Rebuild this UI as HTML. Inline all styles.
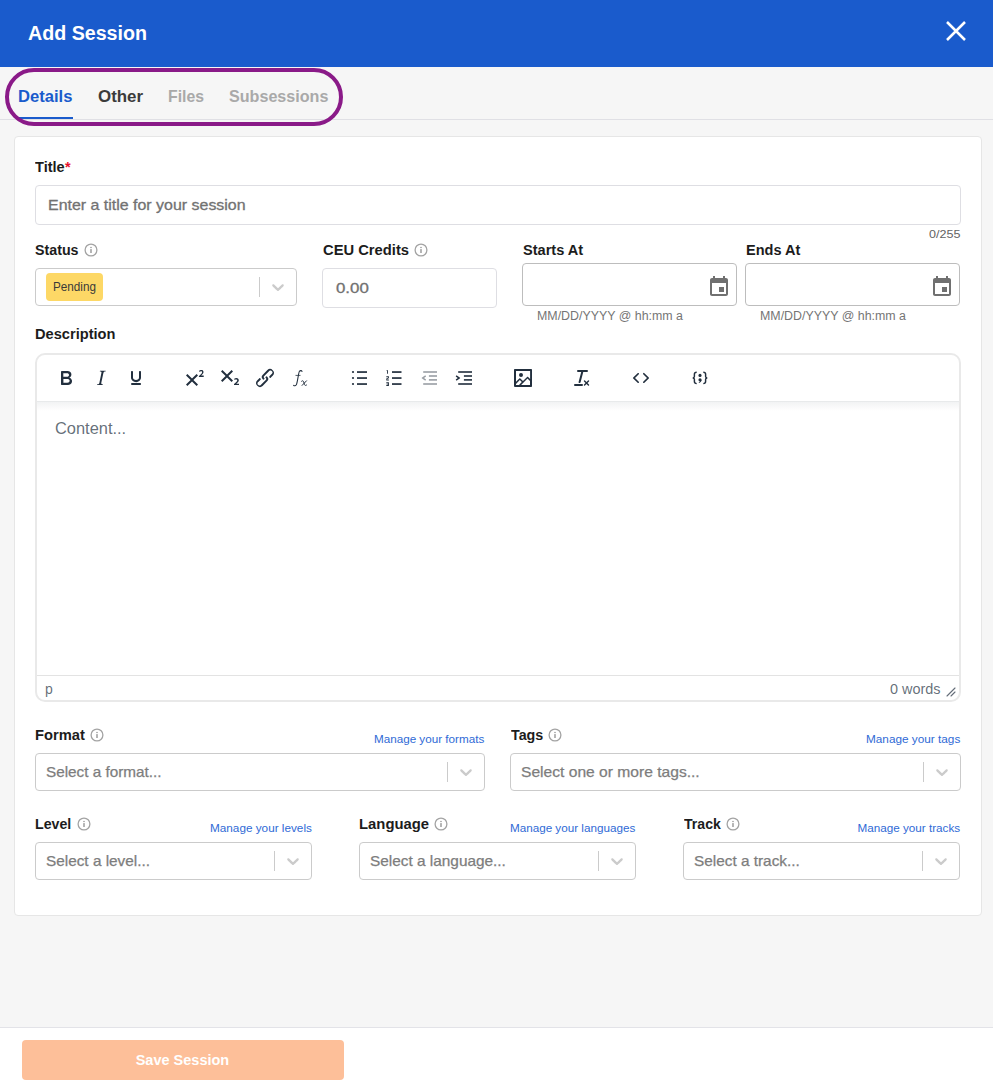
<!DOCTYPE html>
<html><head><meta charset="utf-8"><style>
html,body{margin:0;padding:0;width:993px;height:1086px;overflow:hidden;background:#f6f6f6;position:relative;font-family:"Liberation Sans",sans-serif}
body>div,body>svg{position:absolute}
.t{white-space:nowrap;position:absolute}
svg{position:absolute;overflow:visible}
</style></head><body>
<div style="left:0px;top:0px;width:993px;height:67px;background:#1a5bcc"></div>
<div class="t" style="left:28.20px;top:22.89px;font-size:20px;line-height:20px;color:#fff;font-weight:700;transform:scaleX(0.9824);transform-origin:0 0;">Add Session</div>
<svg style="left:944.5px;top:19.7px" width="22" height="22" viewBox="0 0 22 22"><path d="M2 2L20 20M20 2L2 20" stroke="#fff" stroke-width="2.5" stroke-linecap="butt"/></svg>
<div style="left:0px;top:67px;width:993px;height:960px;background:#f6f6f6"></div>
<div style="left:0px;top:119px;width:993px;height:1px;background:#e0e0e5"></div>
<div class="t" style="left:18.00px;top:88.30px;font-size:16.5px;line-height:16.5px;color:#1a5bcc;font-weight:700;transform:scaleX(1.0054);transform-origin:0 0;">Details</div>
<div style="left:18px;top:117px;width:55px;height:2px;background:#1a5bcc"></div>
<div class="t" style="left:97.50px;top:88.30px;font-size:16.5px;line-height:16.5px;color:#3b3b3b;font-weight:700;transform:scaleX(1.0249);transform-origin:0 0;">Other</div>
<div class="t" style="left:167.60px;top:88.30px;font-size:16.5px;line-height:16.5px;color:#a9a9a9;font-weight:700;transform:scaleX(0.9574);transform-origin:0 0;">Files</div>
<div class="t" style="left:228.70px;top:88.30px;font-size:16.5px;line-height:16.5px;color:#a9a9a9;font-weight:700;transform:scaleX(0.9765);transform-origin:0 0;">Subsessions</div>
<svg style="left:0;top:60px" width="360" height="75"><rect x="7" y="10" width="334" height="54" rx="27" ry="27" fill="none" stroke="#8a1a88" stroke-width="4"/></svg>
<div style="left:14px;top:136px;width:968px;height:780px;background:#fff;border:1px solid #e6e6e6;border-radius:4px;box-sizing:border-box"></div>
<div class="t" style="left:35.00px;top:159.96px;font-size:14.5px;line-height:14.5px;color:#1c1c1c;font-weight:700;transform:scaleX(1.0052);transform-origin:0 0;">Title</div>
<div class="t" style="left:65.00px;top:159.96px;font-size:14.5px;line-height:14.5px;color:#e8112d;font-weight:700;">*</div>
<div style="left:35px;top:185px;width:926px;height:40px;border:1px solid #dedee3;border-radius:4px;box-sizing:border-box;background:#fff"></div>
<div class="t" style="left:48.30px;top:197.76px;font-size:14.5px;line-height:14.5px;color:#727272;font-weight:400;transform:scaleX(1.0995);transform-origin:0 0;-webkit-text-stroke:0.3px #727272;">Enter a title for your session</div>
<div class="t" style="left:928.70px;top:228.37px;font-size:11.6px;line-height:11.6px;color:#636363;font-weight:400;transform:scaleX(1.0817);transform-origin:0 0;">0/255</div>
<div class="t" style="left:35.00px;top:242.56px;font-size:14.5px;line-height:14.5px;color:#1c1c1c;font-weight:700;transform:scaleX(0.9816);transform-origin:0 0;">Status</div>
<svg style="left:84px;top:242.8px" width="14" height="14" viewBox="0 0 14 14"><circle cx="7" cy="7" r="5.9" fill="none" stroke="#a3a3a3" stroke-width="1.3"/><rect x="6.2" y="3.9" width="1.6" height="1.2" fill="#a3a3a3"/><rect x="6.2" y="6.1" width="1.6" height="3.9" fill="#a3a3a3"/></svg>
<div style="left:35px;top:268px;width:262px;height:38px;border:1px solid #cbcbcb;border-radius:4px;box-sizing:border-box;background:#fff"></div>
<div style="left:259px;top:277px;width:1px;height:20px;background:#cbcbcb"></div>
<svg style="left:268px;top:277.0px" width="20" height="20" viewBox="0 0 20 20"><path d="M4.516 7.548c0.436-0.446 1.043-0.481 1.576 0l3.908 3.747 3.908-3.747c0.533-0.481 1.141-0.446 1.574 0 0.436 0.445 0.408 1.197 0 1.615-0.406 0.418-4.695 4.502-4.695 4.502-0.217 0.223-0.502 0.335-0.787 0.335s-0.57-0.112-0.789-0.335c0 0-4.287-4.084-4.695-4.502s-0.436-1.17 0-1.615z" fill="#cbcbcb"/></svg>
<div style="left:46px;top:273px;width:57px;height:28px;background:#fdd866;border-radius:4px"></div>
<div class="t" style="left:52.60px;top:281.23px;font-size:12px;line-height:12px;color:#3a3a3a;font-weight:400;transform:scaleX(0.9764);transform-origin:0 0;">Pending</div>
<div class="t" style="left:322.50px;top:242.96px;font-size:14.5px;line-height:14.5px;color:#1c1c1c;font-weight:700;transform:scaleX(1.0165);transform-origin:0 0;">CEU Credits</div>
<svg style="left:413.9px;top:242.8px" width="14" height="14" viewBox="0 0 14 14"><circle cx="7" cy="7" r="5.9" fill="none" stroke="#a3a3a3" stroke-width="1.3"/><rect x="6.2" y="3.9" width="1.6" height="1.2" fill="#a3a3a3"/><rect x="6.2" y="6.1" width="1.6" height="3.9" fill="#a3a3a3"/></svg>
<div style="left:322px;top:268px;width:175px;height:40px;border:1px solid #dedee3;border-radius:4px;box-sizing:border-box;background:#fff"></div>
<div class="t" style="left:335.50px;top:280.76px;font-size:14.5px;line-height:14.5px;color:#727272;font-weight:400;transform:scaleX(1.1622);transform-origin:0 0;-webkit-text-stroke:0.3px #727272;">0.00</div>
<div class="t" style="left:523.00px;top:243.06px;font-size:14.5px;line-height:14.5px;color:#1c1c1c;font-weight:700;transform:scaleX(1.0051);transform-origin:0 0;">Starts At</div>
<div style="left:522px;top:263px;width:215px;height:43px;border:1px solid #bdbdbd;border-radius:4px;box-sizing:border-box;background:#fff"></div>
<svg style="left:707px;top:275px" width="24" height="24" viewBox="0 0 24 24"><path d="M17 12h-5v5h5v-5zM16 1v2H8V1H6v2H5c-1.11 0-1.99.9-1.99 2L3 19c0 1.1.89 2 2 2h14c1.1 0 2-.9 2-2V5c0-1.1-.9-2-2-2h-1V1h-2zm3 18H5V8h14v11z" fill="#707070"/></svg>
<div class="t" style="left:537.00px;top:309.78px;font-size:12.3px;line-height:12.3px;color:#757575;font-weight:400;transform:scaleX(1.0079);transform-origin:0 0;">MM/DD/YYYY @ hh:mm a</div>
<div class="t" style="left:746.00px;top:243.06px;font-size:14.5px;line-height:14.5px;color:#1c1c1c;font-weight:700;">Ends At</div>
<div style="left:745px;top:263px;width:215px;height:43px;border:1px solid #bdbdbd;border-radius:4px;box-sizing:border-box;background:#fff"></div>
<svg style="left:930px;top:275px" width="24" height="24" viewBox="0 0 24 24"><path d="M17 12h-5v5h5v-5zM16 1v2H8V1H6v2H5c-1.11 0-1.99.9-1.99 2L3 19c0 1.1.89 2 2 2h14c1.1 0 2-.9 2-2V5c0-1.1-.9-2-2-2h-1V1h-2zm3 18H5V8h14v11z" fill="#707070"/></svg>
<div class="t" style="left:760.00px;top:309.78px;font-size:12.3px;line-height:12.3px;color:#757575;font-weight:400;transform:scaleX(1.0079);transform-origin:0 0;">MM/DD/YYYY @ hh:mm a</div>
<div class="t" style="left:35.00px;top:326.96px;font-size:14.5px;line-height:14.5px;color:#1c1c1c;font-weight:700;transform:scaleX(1.0092);transform-origin:0 0;">Description</div>
<div style="left:35px;top:352.5px;width:926px;height:349.5px;border:2px solid #e9e9e9;border-radius:10px;box-sizing:border-box;background:#fff;overflow:hidden"></div>
<div style="left:37px;top:402px;width:922px;height:9px;background:linear-gradient(rgba(34,47,62,.06),rgba(34,47,62,0))"></div>
<div style="left:37px;top:401px;width:922px;height:1px;background:rgba(34,47,62,.1)"></div>
<svg style="left:54px;top:366px" width="24" height="24" viewBox="0 0 24 24"><path d="M7.8 19c-.3 0-.5 0-.6-.2l-.2-.5V5.7c0-.2 0-.4.2-.5l.6-.2h5c1.5 0 2.7.3 3.5 1 .7.6 1.1 1.4 1.1 2.5a3 3 0 0 1-.6 1.9c-.4.6-1 1-1.6 1.2.4.1.9.3 1.3.6s.8.7 1 1.2c.4.4.5 1 .5 1.6 0 1.3-.4 2.3-1.3 3-.8.7-2.1 1-3.8 1H7.8Zm5-8.3c.6 0 1.2-.1 1.6-.5.4-.3.6-.7.6-1.3 0-1.1-.8-1.7-2.3-1.7H9.3v3.5h3.4Zm.5 6c.7 0 1.3-.1 1.700-.4.4-.4.6-.9.6-1.5s-.2-1-.7-1.4c-.4-.3-1-.4-2-.4H9.4v3.8h4Z" fill="#222f3e" fill-rule="evenodd"/></svg>
<svg style="left:89px;top:366px" width="24" height="24" viewBox="0 0 24 24"><path d="m16.7 4.7-.1.9h-.3c-.6 0-1 0-1.4.3-.3.3-.4.6-.5 1.1l-2.1 9.8v.6c0 .5.4.8 1.4.8h.2l-.2.8H8l.2-.8h.2c1.1 0 1.8-.5 2-1.5l2-9.8.1-.5c0-.6-.4-.8-1.4-.8h-.3l.2-.9h5.8Z" fill="#222f3e" fill-rule="evenodd"/></svg>
<svg style="left:124px;top:366px" width="24" height="24" viewBox="0 0 24 24"><path d="M16 5c.6 0 1 .4 1 1v5.5a4 4 0 0 1-.4 1.8l-1 1.4a5.3 5.3 0 0 1-5.5 1 5 5 0 0 1-1.6-1c-.5-.4-.8-.9-1.1-1.4a4 4 0 0 1-.4-1.800V6c0-.6.4-1 1-1s1 .4 1 1v5.5c0 .3 0 .6.2 1l.6.7a3.300 3.300 0 0 0 2.2.8 3.400 3.400 0 0 0 2.2-.8c.3-.2.4-.5.6-.8l.2-.9V6c0-.6.4-1 1-1ZM8 17h8c.6 0 1 .4 1 1s-.4 1-1 1H8a1 1 0 0 1 0-2Z" fill="#222f3e" fill-rule="evenodd"/></svg>
<svg style="left:183px;top:366px" width="24" height="24" viewBox="0 0 24 24"><path d="M15 9.4 10.4 14l4.6 4.6-1.4 1.4L9 15.4 4.4 20 3 18.6 7.6 14 3 9.4 4.4 8 9 12.6 13.6 8 15 9.4Zm5.9 1.6h-5v-1l1-.8 1.7-1.6c.3-.5.5-.9.5-1.300 0-.3 0-.5-.2-.7-.2-.2-.5-.3-.9-.3l-.8.2-.7.4-.4-1.2c.2-.2.5-.4 1-.5.3-.2.8-.2 1.2-.2.7 0 1.2.1 1.6.5.4.4.6.9.6 1.5s-.2 1.1-.5 1.6a8 8 0 0 1-1.3 1.3l-.6.6h2.6V11Z" fill="#222f3e" fill-rule="nonzero"/></svg>
<svg style="left:218px;top:366px" width="24" height="24" viewBox="0 0 24 24"><path d="M10.4 10 15 14.6 13.6 16 9 11.4 4.4 16 3 14.6 7.6 10 3 5.4 4.4 4 9 8.600 13.600 4 15 5.4 10.4 10ZM21 19h-5v-1l1-.8 1.7-1.6c.3-.4.5-.8.5-1.2 0-.3 0-.6-.2-.7-.2-.2-.5-.3-.9-.3a2 2 0 0 0-.8.2l-.7.3-.4-1.100 1-.6 1.2-.2c.8 0 1.4.3 1.800.7.4.4.6.9.6 1.5s-.2 1.1-.5 1.6a8 8 0 0 1-1.3 1.3l-.6.6h2.6V19Z" fill="#222f3e" fill-rule="nonzero"/></svg>
<svg style="left:253px;top:366px" width="24" height="24" viewBox="0 0 24 24"><path d="M6.2 12.3a1 1 0 0 1 1.4 1.4l-2 2a2 2 0 1 0 2.6 2.8l4.8-4.8a1 1 0 0 0 0-1.4 1 1 0 1 1 1.4-1.3 2.9 2.9 0 0 1 0 4L9.600 20a3.900 3.900 0 0 1-5.500-5.500l2-2Zm11.600-.6a1 1 0 0 1-1.400-1.400l2-2a2 2 0 1 0-2.600-2.800L11 10.300a1 1 0 0 0 0 1.400A1 1 0 1 1 9.600 13a2.900 2.900 0 0 1 0-4L14.400 4a3.900 3.900 0 0 1 5.500 5.500l-2 2Z" fill="#222f3e" fill-rule="nonzero"/></svg>
<svg style="left:288px;top:366px" width="24" height="24" viewBox="0 0 24 24"><g fill="none" stroke="#222f3e" stroke-linecap="round"><path d="M14 5.4C13.7 4.5 12.2 4.3 11.4 5.3C10.5 6.5 9.5 16.6 8.3 18.8C7.7 19.8 6.4 20 5.6 19.3" stroke-width="1.05"/><path d="M7.9 9.4H12.1" stroke-width="0.8"/><path d="M13.5 15.3C14.3 14.4 15.2 14.5 15.6 15.8L16.6 18.7C16.9 19.6 17.8 19.8 18.7 18.9" stroke-width="0.9"/><path d="M18.5 14.8L14.1 19.4" stroke-width="1"/></g></svg>
<svg style="left:347px;top:366px" width="24" height="24" viewBox="0 0 24 24"><g fill="#222f3e"><circle cx="6" cy="6" r="1.1"/><circle cx="6" cy="12" r="1.1"/><circle cx="6" cy="18" r="1.1"/><rect x="10" y="5.2" width="10" height="1.7"/><rect x="10" y="11.2" width="10" height="1.7"/><rect x="10" y="17.2" width="10" height="1.7"/></g></svg>
<svg style="left:382px;top:366px" width="24" height="24" viewBox="0 0 24 24"><g fill="#222f3e"><rect x="10" y="5.2" width="9.5" height="1.7"/><rect x="10" y="11.2" width="9.5" height="1.7"/><rect x="10" y="17.2" width="9.5" height="1.7"/><path d="M4.600 4.200h1.400v3.600h-.9V5h-.5z"/><path d="M4.300 10.300h2.600v1.900l-1.700 .8v.5h1.700v.9H4.300v-1.900l1.700-.8v-.5H4.300z"/><path d="M4.300 16.300h2.600v3.600H4.300v-.8h1.700v-.6H4.600v-.7h1.400v-.6H4.300z"/></g></svg>
<svg style="left:417px;top:366px" width="24" height="24" viewBox="0 0 24 24"><g fill="#9a9fa5"><rect x="6.2" y="5.2" width="13.8" height="1.6"/><rect x="11.9" y="9.2" width="8.1" height="1.6"/><rect x="11.9" y="13.1" width="8.1" height="1.6"/><rect x="6.2" y="17.2" width="13.8" height="1.6"/><path d="M8.3 9.3l.8 1.2-2.1 1.5 2.1 1.5-.8 1.2-3.6-2.4v-.6z"/></g></svg>
<svg style="left:452px;top:366px" width="24" height="24" viewBox="0 0 24 24"><g fill="#222f3e"><rect x="6.2" y="5.2" width="13.8" height="1.6"/><rect x="11.9" y="9.2" width="8.1" height="1.6"/><rect x="11.9" y="13.1" width="8.1" height="1.6"/><rect x="6.2" y="17.2" width="13.8" height="1.6"/><path d="M4.5 9.3l-.8 1.2 2.1 1.5-2.1 1.5.8 1.2 3.6-2.4v-.6z"/></g></svg>
<svg style="left:511px;top:366px" width="24" height="24" viewBox="0 0 24 24"><path d="M5 15.700l3.300-3.200c.3-.3.7-.3 1 0L12 15l4.100-4c.3-.4.8-.4 1 0l2 1.900V5H5v10.700zM5 18V19h3l2.800-2.900-2-2L5 17.900zm14-3l-2.500-2.400-6.400 6.500H19v-4zM4 3h16c.6 0 1 .4 1 1v16c0 .6-.4 1-1 1H4a1 1 0 0 1-1-1V4c0-.6.4-1 1-1zm6 8a2 2 0 1 1 0-4 2 2 0 0 1 0 4z" fill="#222f3e" fill-rule="nonzero"/></svg>
<svg style="left:570px;top:366px" width="24" height="24" viewBox="0 0 24 24"><path d="M13.200 6a1 1 0 0 1 0 .2l-2.600 10a1 1 0 0 1-1 .8h-.2a.8.8 0 0 1-.8-1l2.600-10H8a1 1 0 1 1 0-2h9a1 1 0 0 1 0 2h-3.800ZM5 18h7a1 1 0 0 1 0 2H5a1 1 0 0 1 0-2Zm13 1.500L16.500 18 15 19.500a.7.7 0 0 1-1-1l1.500-1.500-1.500-1.500a.7.7 0 0 1 1-1l1.500 1.500 1.500-1.500a.7.7 0 0 1 1 1L17.500 17l1.500 1.500a.7.7 0 0 1-1 1Z" fill="#222f3e" fill-rule="evenodd"/></svg>
<svg style="left:629px;top:366px" width="24" height="24" viewBox="0 0 24 24"><path d="M9.800 15.700c.3.3.3.8 0 1-.3.4-.9.4-1.200 0l-4.400-4.100a.8.8 0 0 1 0-1.200l4.400-4.200c.3-.3.9-.3 1.200 0 .3.3.3.8 0 1.100L6 12l3.800 3.700ZM14.200 15.700c-.3.3-.3.8 0 1 .4.4.9.4 1.200 0l4.400-4.100c.3-.3.3-.9 0-1.200l-4.400-4.200a.8.8 0 0 0-1.200 0c-.3.3-.3.8 0 1.100L18 12l-3.800 3.700Z" fill="#222f3e" fill-rule="nonzero"/></svg>
<svg style="left:688px;top:366px" width="24" height="24" viewBox="0 0 24 24"><g fill="none" stroke="#222f3e" stroke-width="1.45"><path d="M8.7 6.2C7 6.2 6.4 6.9 6.4 8.1V10.5C6.4 11.3 5.9 11.9 4.7 11.9C5.9 11.9 6.4 12.5 6.4 13.3V15.6C6.4 16.9 7 17.6 8.7 17.6"/><path d="M15.3 6.2C17 6.2 17.6 6.9 17.6 8.1V10.5C17.6 11.3 18.1 11.9 19.3 11.9C18.1 11.9 17.6 12.5 17.6 13.3V15.6C17.6 16.9 17 17.6 15.3 17.6"/></g><g fill="#222f3e"><circle cx="12" cy="9.4" r="1.55"/><circle cx="12" cy="13.7" r="1.55"/><path d="M13.5 13.7C13.6 15.4 12.6 16.4 10.9 16.9L10.8 16.2C11.8 15.8 12.3 15.1 12.2 14.3Z"/></g></svg>
<div class="t" style="left:54.8px;top:420.5px;font-size:16px;line-height:16px;color:rgba(34,47,62,.7);transform:scaleX(1.025);transform-origin:0 0">Content...</div>
<div style="left:37px;top:675px;width:922px;height:1px;background:#e3e3e3"></div>
<div class="t" style="left:45px;top:682px;font-size:14px;line-height:14px;color:rgba(34,47,62,.7)">p</div>
<div class="t" style="left:890.4px;top:682px;font-size:14px;line-height:14px;color:rgba(34,47,62,.7);transform:scaleX(1.03);transform-origin:0 0">0 words</div>
<svg style="left:946px;top:687px" width="10" height="10" viewBox="0 0 10 10"><path d="M9 1L1 9M9 5L5 9" stroke="rgba(34,47,62,.7)" stroke-width="1.1" stroke-linecap="round"/></svg>

<div class="t" style="left:35.00px;top:728.06px;font-size:14.5px;line-height:14.5px;color:#1c1c1c;font-weight:700;transform:scaleX(1.0134);transform-origin:0 0;">Format</div>
<svg style="left:90px;top:727.8px" width="14" height="14" viewBox="0 0 14 14"><circle cx="7" cy="7" r="5.9" fill="none" stroke="#a3a3a3" stroke-width="1.3"/><rect x="6.2" y="3.9" width="1.6" height="1.2" fill="#a3a3a3"/><rect x="6.2" y="6.1" width="1.6" height="3.9" fill="#a3a3a3"/></svg>
<div class="t" style="left:373.90px;top:733.18px;font-size:11.7px;line-height:11.7px;color:#2f6ad6;font-weight:400;">Manage your formats</div>
<div style="left:35px;top:753px;width:450px;height:38px;border:1px solid #cbcbcb;border-radius:4px;box-sizing:border-box;background:#fff"></div>
<div style="left:447px;top:762px;width:1px;height:20px;background:#cbcbcb"></div>
<svg style="left:456px;top:762.0px" width="20" height="20" viewBox="0 0 20 20"><path d="M4.516 7.548c0.436-0.446 1.043-0.481 1.576 0l3.908 3.747 3.908-3.747c0.533-0.481 1.141-0.446 1.574 0 0.436 0.445 0.408 1.197 0 1.615-0.406 0.418-4.695 4.502-4.695 4.502-0.217 0.223-0.502 0.335-0.787 0.335s-0.57-0.112-0.789-0.335c0 0-4.287-4.084-4.695-4.502s-0.436-1.17 0-1.615z" fill="#cbcbcb"/></svg>
<div class="t" style="left:46.00px;top:764.86px;font-size:14.5px;line-height:14.5px;color:#7d7d7d;font-weight:400;transform:scaleX(1.0547);transform-origin:0 0;-webkit-text-stroke:0.25px #7d7d7d;">Select a format...</div>
<div class="t" style="left:510.90px;top:728.06px;font-size:14.5px;line-height:14.5px;color:#1c1c1c;font-weight:700;transform:scaleX(0.9857);transform-origin:0 0;">Tags</div>
<svg style="left:548.2px;top:727.8px" width="14" height="14" viewBox="0 0 14 14"><circle cx="7" cy="7" r="5.9" fill="none" stroke="#a3a3a3" stroke-width="1.3"/><rect x="6.2" y="3.9" width="1.6" height="1.2" fill="#a3a3a3"/><rect x="6.2" y="6.1" width="1.6" height="3.9" fill="#a3a3a3"/></svg>
<div class="t" style="left:865.90px;top:733.18px;font-size:11.7px;line-height:11.7px;color:#2f6ad6;font-weight:400;transform:scaleX(1.0079);transform-origin:0 0;">Manage your tags</div>
<div style="left:510px;top:753px;width:451px;height:38px;border:1px solid #cbcbcb;border-radius:4px;box-sizing:border-box;background:#fff"></div>
<div style="left:923px;top:762px;width:1px;height:20px;background:#cbcbcb"></div>
<svg style="left:932px;top:762.0px" width="20" height="20" viewBox="0 0 20 20"><path d="M4.516 7.548c0.436-0.446 1.043-0.481 1.576 0l3.908 3.747 3.908-3.747c0.533-0.481 1.141-0.446 1.574 0 0.436 0.445 0.408 1.197 0 1.615-0.406 0.418-4.695 4.502-4.695 4.502-0.217 0.223-0.502 0.335-0.787 0.335s-0.57-0.112-0.789-0.335c0 0-4.287-4.084-4.695-4.502s-0.436-1.17 0-1.615z" fill="#cbcbcb"/></svg>
<div class="t" style="left:521.00px;top:764.86px;font-size:14.5px;line-height:14.5px;color:#7d7d7d;font-weight:400;transform:scaleX(1.0763);transform-origin:0 0;-webkit-text-stroke:0.25px #7d7d7d;">Select one or more tags...</div>
<div class="t" style="left:35.30px;top:816.86px;font-size:14.5px;line-height:14.5px;color:#1c1c1c;font-weight:700;transform:scaleX(0.9763);transform-origin:0 0;">Level</div>
<svg style="left:77px;top:817px" width="14" height="14" viewBox="0 0 14 14"><circle cx="7" cy="7" r="5.9" fill="none" stroke="#a3a3a3" stroke-width="1.3"/><rect x="6.2" y="3.9" width="1.6" height="1.2" fill="#a3a3a3"/><rect x="6.2" y="6.1" width="1.6" height="3.9" fill="#a3a3a3"/></svg>
<div class="t" style="left:210.00px;top:822.48px;font-size:11.7px;line-height:11.7px;color:#2f6ad6;font-weight:400;transform:scaleX(1.0053);transform-origin:0 0;">Manage your levels</div>
<div style="left:35px;top:842px;width:277px;height:38px;border:1px solid #cbcbcb;border-radius:4px;box-sizing:border-box;background:#fff"></div>
<div style="left:274px;top:851px;width:1px;height:20px;background:#cbcbcb"></div>
<svg style="left:283px;top:851.0px" width="20" height="20" viewBox="0 0 20 20"><path d="M4.516 7.548c0.436-0.446 1.043-0.481 1.576 0l3.908 3.747 3.908-3.747c0.533-0.481 1.141-0.446 1.574 0 0.436 0.445 0.408 1.197 0 1.615-0.406 0.418-4.695 4.502-4.695 4.502-0.217 0.223-0.502 0.335-0.787 0.335s-0.57-0.112-0.789-0.335c0 0-4.287-4.084-4.695-4.502s-0.436-1.17 0-1.615z" fill="#cbcbcb"/></svg>
<div class="t" style="left:45.60px;top:853.96px;font-size:14.5px;line-height:14.5px;color:#7d7d7d;font-weight:400;transform:scaleX(1.0577);transform-origin:0 0;-webkit-text-stroke:0.25px #7d7d7d;">Select a level...</div>
<div class="t" style="left:358.60px;top:816.86px;font-size:14.5px;line-height:14.5px;color:#1c1c1c;font-weight:700;transform:scaleX(1.0236);transform-origin:0 0;">Language</div>
<svg style="left:434.2px;top:817px" width="14" height="14" viewBox="0 0 14 14"><circle cx="7" cy="7" r="5.9" fill="none" stroke="#a3a3a3" stroke-width="1.3"/><rect x="6.2" y="3.9" width="1.6" height="1.2" fill="#a3a3a3"/><rect x="6.2" y="6.1" width="1.6" height="3.9" fill="#a3a3a3"/></svg>
<div class="t" style="left:509.90px;top:822.48px;font-size:11.7px;line-height:11.7px;color:#2f6ad6;font-weight:400;">Manage your languages</div>
<div style="left:359px;top:842px;width:277px;height:38px;border:1px solid #cbcbcb;border-radius:4px;box-sizing:border-box;background:#fff"></div>
<div style="left:598px;top:851px;width:1px;height:20px;background:#cbcbcb"></div>
<svg style="left:607px;top:851.0px" width="20" height="20" viewBox="0 0 20 20"><path d="M4.516 7.548c0.436-0.446 1.043-0.481 1.576 0l3.908 3.747 3.908-3.747c0.533-0.481 1.141-0.446 1.574 0 0.436 0.445 0.408 1.197 0 1.615-0.406 0.418-4.695 4.502-4.695 4.502-0.217 0.223-0.502 0.335-0.787 0.335s-0.57-0.112-0.789-0.335c0 0-4.287-4.084-4.695-4.502s-0.436-1.17 0-1.615z" fill="#cbcbcb"/></svg>
<div class="t" style="left:369.80px;top:853.96px;font-size:14.5px;line-height:14.5px;color:#7d7d7d;font-weight:400;transform:scaleX(1.0602);transform-origin:0 0;-webkit-text-stroke:0.25px #7d7d7d;">Select a language...</div>
<div class="t" style="left:683.70px;top:816.86px;font-size:14.5px;line-height:14.5px;color:#1c1c1c;font-weight:700;transform:scaleX(0.9711);transform-origin:0 0;">Track</div>
<svg style="left:726px;top:817px" width="14" height="14" viewBox="0 0 14 14"><circle cx="7" cy="7" r="5.9" fill="none" stroke="#a3a3a3" stroke-width="1.3"/><rect x="6.2" y="3.9" width="1.6" height="1.2" fill="#a3a3a3"/><rect x="6.2" y="6.1" width="1.6" height="3.9" fill="#a3a3a3"/></svg>
<div class="t" style="left:857.50px;top:822.48px;font-size:11.7px;line-height:11.7px;color:#2f6ad6;font-weight:400;">Manage your tracks</div>
<div style="left:683px;top:842px;width:277px;height:38px;border:1px solid #cbcbcb;border-radius:4px;box-sizing:border-box;background:#fff"></div>
<div style="left:922px;top:851px;width:1px;height:20px;background:#cbcbcb"></div>
<svg style="left:931px;top:851.0px" width="20" height="20" viewBox="0 0 20 20"><path d="M4.516 7.548c0.436-0.446 1.043-0.481 1.576 0l3.908 3.747 3.908-3.747c0.533-0.481 1.141-0.446 1.574 0 0.436 0.445 0.408 1.197 0 1.615-0.406 0.418-4.695 4.502-4.695 4.502-0.217 0.223-0.502 0.335-0.787 0.335s-0.57-0.112-0.789-0.335c0 0-4.287-4.084-4.695-4.502s-0.436-1.17 0-1.615z" fill="#cbcbcb"/></svg>
<div class="t" style="left:693.60px;top:853.96px;font-size:14.5px;line-height:14.5px;color:#7d7d7d;font-weight:400;transform:scaleX(1.0588);transform-origin:0 0;-webkit-text-stroke:0.25px #7d7d7d;">Select a track...</div>
<div style="left:0px;top:1027px;width:993px;height:59px;background:#fff"></div>
<div style="left:0px;top:1027px;width:993px;height:1px;background:#e3e3e8"></div>
<div style="left:22px;top:1040px;width:322px;height:40px;background:#fdbf99;border-radius:4px"></div>
<div class="t" style="left:135.70px;top:1052.96px;font-size:14.5px;line-height:14.5px;color:#fff;font-weight:700;">Save Session</div>
</body></html>
